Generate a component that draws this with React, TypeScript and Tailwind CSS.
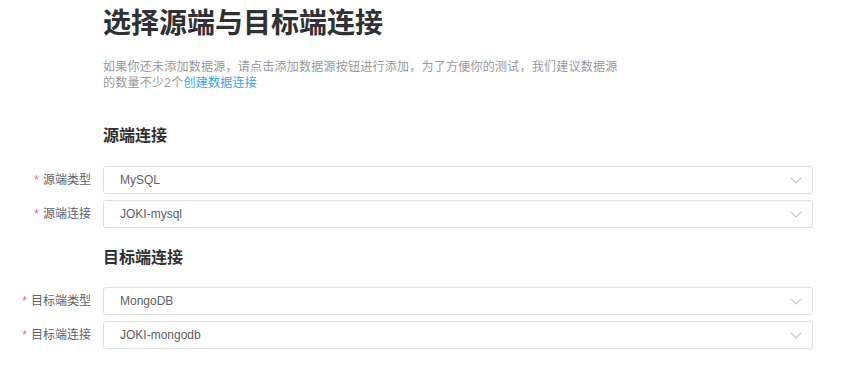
const font = { fontFamily: '"Liberation Sans", "Noto Sans CJK SC", sans-serif' };

function Chevron() {
  return (
    <svg width="12" height="7" viewBox="0 0 12 7" fill="none" className="shrink-0">
      <path d="M0.8 0.8 L6 6 L11.2 0.8" stroke="#c0c4cc" strokeWidth="1.1" />
    </svg>
  );
}

function SelectRow({ label, value }: { label: string; value: string }) {
  return (
    <div className="flex items-center h-[28px]">
      <label className="w-[103px] shrink-0 pr-3 text-right text-[12px] text-[#606266]">
        <span className="text-[#f56c6c] mr-1">*</span>
        {label}
      </label>
      <div className="w-[710px] h-[28px] flex items-center justify-between border border-[#dcdfe6] rounded-[3px] bg-white pl-4 pr-[10px]">
        <span className="text-[12px] text-[#606266]">{value}</span>
        <Chevron />
      </div>
    </div>
  );
}

export default function App() {
  return (
    <div className="w-[845px] h-[371px] bg-white" style={font}>
      <div className="pl-[103px] pt-[6px]">
        <h1 className="text-[28px] font-bold text-[#303133] leading-[36px]">
          选择源端与目标端连接
        </h1>
        <div className="mt-[17px] text-[12px] leading-[16px] text-[#999999] tracking-[0.25px]">
          <p>如果你还未添加数据源，请点击添加数据源按钮进行添加，为了方便你的测试，我们建议数据源</p>
          <p>
            的数量不少2个<a className="text-[#409eff] cursor-pointer">创建数据连接</a>
          </p>
        </div>
      </div>

      <h2 className="pl-[103px] mt-[33px] text-[16px] font-bold text-[#303133] leading-[24px]">
        源端连接
      </h2>
      <div className="mt-[18px] flex flex-col gap-[6px]">
        <SelectRow label="源端类型" value="MySQL" />
        <SelectRow label="源端连接" value="JOKI-mysql" />
      </div>

      <h2 className="pl-[103px] mt-[18px] text-[16px] font-bold text-[#303133] leading-[24px]">
        目标端连接
      </h2>
      <div className="mt-[17px] flex flex-col gap-[6px]">
        <SelectRow label="目标端类型" value="MongoDB" />
        <SelectRow label="目标端连接" value="JOKI-mongodb" />
      </div>
    </div>
  );
}
